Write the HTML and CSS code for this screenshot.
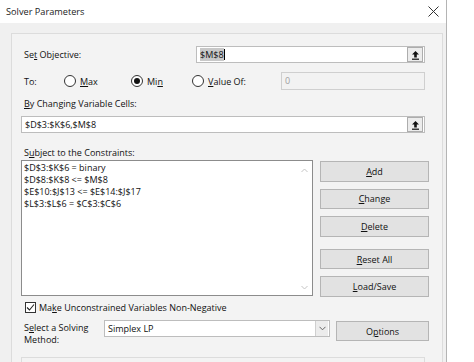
FILE: index.html
```html
<!DOCTYPE html>
<html lang="en">
<head>
  <meta charset="UTF-8" />
  <meta name="viewport" content="width=device-width, initial-scale=1" />
  <title>Solver Parameters</title>
  <link rel="stylesheet" href="styles.css">
</head>
<body>
  <div class="window">
    <div class="titlebar">
      <span class="title">Solver Parameters</span>
      <svg class="close" width="11" height="11" viewBox="0 0 11 11"><path d="M0.5 0.5L10.5 10.5M10.5 0.5L0.5 10.5" stroke="#333" stroke-width="1" fill="none"/></svg>
    </div>
    <div class="body">
      <div class="group">
        <div class="row objective">
          <label class="lbl">Se<u>t</u> Objective:</label>
          <div class="field obj-field">
            <span class="sel-text">$M$8</span><span class="caret"></span>
            <button class="ref-btn" type="button"><svg width="9" height="10" viewBox="0 0 9 10"><path d="M4.5 1L1 4.5H3.2V7.5H5.8V4.5H8Z" fill="#111"/><rect x="1" y="8.6" width="7" height="1.2" fill="#111"/></svg></button>
          </div>
        </div>

        <div class="row to-row">
          <span class="lbl to-lbl">To:</span>
          <span class="radio-opt r-max"><span class="radio"></span><span><u>M</u>ax</span></span>
          <span class="radio-opt r-min"><span class="radio on"></span><span>Mi<u>n</u></span></span>
          <span class="radio-opt r-val"><span class="radio"></span><span><u>V</u>alue Of:</span></span>
          <div class="field value-field">0</div>
        </div>

        <div class="caption"><u>B</u>y Changing Variable Cells:</div>
        <div class="field wide-field">
          $D$3:$K$6,$M$8
          <button class="ref-btn" type="button"><svg width="9" height="10" viewBox="0 0 9 10"><path d="M4.5 1L1 4.5H3.2V7.5H5.8V4.5H8Z" fill="#111"/><rect x="1" y="8.6" width="7" height="1.2" fill="#111"/></svg></button>
        </div>

        <div class="caption subject">S<u>u</u>bject to the Constraints:</div>
        <div class="constraints">
          <div class="listbox">
            <div>$D$3:$K$6 = binary</div>
            <div>$D$8:$K$8 &lt;= $M$8</div>
            <div>$E$10:$J$13 &lt;= $E$14:$J$17</div>
            <div>$L$3:$L$6 = $C$3:$C$6</div>
            <svg class="scroll-up" width="7" height="5" viewBox="0 0 7 5"><path d="M0.5 4L3.5 1L6.5 4" stroke="#c4c4c4" stroke-width="1" fill="none"/></svg>
            <svg class="scroll-down" width="7" height="5" viewBox="0 0 7 5"><path d="M0.5 1L3.5 4L6.5 1" stroke="#c4c4c4" stroke-width="1" fill="none"/></svg>
          </div>
          <div class="buttons">
            <button class="btn" type="button"><u>A</u>dd</button>
            <button class="btn" type="button"><u>C</u>hange</button>
            <button class="btn" type="button"><u>D</u>elete</button>
            <button class="btn spaced" type="button"><u>R</u>eset All</button>
            <button class="btn" type="button"><u>L</u>oad/Save</button>
          </div>
        </div>

        <div class="check-row">
          <span class="checkbox"><svg width="9" height="9" viewBox="0 0 9 9"><path d="M1 4.5L3.5 7L8 1.5" stroke="#222" stroke-width="1.1" fill="none"/></svg></span>
          <span>Ma<u>k</u>e Unconstrained Variables Non-Negative</span>
        </div>

        <div class="method-row">
          <div class="method-lbl">S<u>e</u>lect a Solving<br>Method:</div>
          <div class="field select">
            Simplex LP
            <span class="drop"><svg width="7" height="5" viewBox="0 0 7 5"><path d="M0.5 0.8L3.5 3.8L6.5 0.8" stroke="#666" stroke-width="1" fill="none"/></svg></span>
          </div>
          <button class="btn options" type="button">O<u>p</u>tions</button>
        </div>

        <div class="method-box"></div>
      </div>
    </div>
  </div>
</body>
</html>
```

FILE: styles.css
```css
* {
  box-sizing: border-box;
}
body {
  margin: 0;
  background: #fff;
  font-family: "Open Sans", "Noto Sans", sans-serif;
  font-size: 9px;
  color: #111;
}
u {
  text-decoration: underline;
  text-underline-offset: 1px;
}
.window {
  width: 447px;
  height: 362px;
  border-right: 1px solid #b4b4b4;
  background: #f0f0f0;
  overflow: hidden;
}
.titlebar {
  height: 23px;
  background: #fff;
  display: flex;
  align-items: center;
  justify-content: space-between;
  padding: 0 7px 0 6px;
}
.title {
  font-size: 9.2px;
  color: #222;
}
.body {
  padding: 10px 0 0 11px;
}
.group {
  width: 432px;
  height: 340px;
  border: 1px solid #dcdcdc;
  background: #f3f3f3;
  padding: 12px 0 0 9px;
}
.row {
  display: flex;
  align-items: center;
}
.lbl {
  padding-left: 3px;
}
.objective {
  height: 17px;
}
.objective .lbl {
  width: 175px;
}
.field {
  position: relative;
  background: #fff;
  border: 1px solid #bdbdbd;
  height: 17px;
  line-height: 15px;
  padding-left: 3px;
  white-space: nowrap;
}
.obj-field {
  width: 229px;
}
.sel-text {
  background: #c8c8c8;
}
.caret {
  display: inline-block;
  width: 1px;
  height: 11px;
  background: #000;
  vertical-align: -2px;
}
.ref-btn {
  position: absolute;
  right: 1px;
  top: 0;
  width: 16px;
  height: 15px;
  padding: 0;
  border: 1px solid #adadad;
  background: #ececec;
  display: flex;
  align-items: center;
  justify-content: center;
}
.to-row {
  height: 18px;
  margin-top: 9px;
}
.to-lbl {
  width: 43px;
}
.radio-opt {
  display: flex;
  align-items: center;
  gap: 4px;
}
.r-max {
  width: 67px;
}
.r-min {
  width: 61px;
}
.r-val {
  width: 89px;
}
.radio {
  width: 12px;
  height: 12px;
  border: 1px solid #333;
  border-radius: 50%;
  background: #fff;
  position: relative;
}
.radio.on::after {
  content: "";
  position: absolute;
  left: 2px;
  top: 2px;
  width: 6px;
  height: 6px;
  border-radius: 50%;
  background: #111;
}
.value-field {
  width: 144px;
  height: 18px;
  background: #f2f2f2;
  border-color: #cfcfcf;
  color: #a0a0a0;
}
.caption {
  margin-top: 6px;
  height: 15px;
  line-height: 15px;
  padding-left: 3px;
}
.wide-field {
  margin-top: 5px;
  width: 404px;
}
.subject {
  margin-top: 13px;
  height: 14px;
  line-height: 14px;
}
.constraints {
  display: flex;
  gap: 7px;
  height: 137px;
}
.listbox {
  position: relative;
  width: 292px;
  height: 136px;
  background: #fff;
  border: 1px solid #8c8c8c;
  padding: 1px 2px;
  line-height: 12px;
}
.scroll-up,
.scroll-down {
  position: absolute;
  right: 4px;
}
.scroll-up {
  top: 7px;
}
.scroll-down {
  bottom: 5px;
}
.buttons {
  display: flex;
  flex-direction: column;
  gap: 7px;
  padding-top: 1px;
}
.btn {
  width: 109px;
  height: 21px;
  border: 1px solid #b5b5b5;
  background: #e2e2e2;
  font-family: inherit;
  font-size: 9px;
  color: #111;
  padding: 0;
}
.buttons .spaced {
  margin-top: 5px;
}
.check-row {
  display: flex;
  align-items: center;
  gap: 3px;
  margin-top: 3px;
  height: 14px;
  padding-left: 4px;
}
.checkbox {
  width: 11px;
  height: 11px;
  border: 1px solid #333;
  background: #fff;
  display: flex;
  align-items: center;
  justify-content: center;
}
.method-row {
  display: flex;
  align-items: flex-start;
  margin-top: 6px;
}
.method-lbl {
  width: 83px;
  padding: 2px 0 0 3px;
  line-height: 12px;
}
.select {
  width: 226px;
}
.drop {
  position: absolute;
  right: 1px;
  top: 0;
  width: 13px;
  height: 15px;
  background: #ececec;
  border-left: 1px solid #cfcfcf;
  display: flex;
  align-items: center;
  justify-content: center;
}
.options {
  margin: 1px 0 0 6px;
  width: 93px;
  height: 20px;
}
.method-box {
  margin-top: 11px;
  width: 404px;
  height: 40px;
  border: 1px solid #dcdcdc;
  background: #f3f3f3;
}
```
